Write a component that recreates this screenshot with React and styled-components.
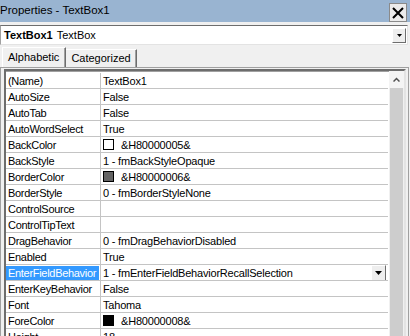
import React from "react";
import styled, { createGlobalStyle } from "styled-components";

const Global = createGlobalStyle`
  html, body { margin: 0; padding: 0; background: #f0f0f0; }
  body { font-family: "Liberation Sans", Arial, sans-serif; }
`;

const Window = styled.div`
  width: 410px;
  height: 336px;
  overflow: hidden;
  background: #f0f0f0;
  display: flex;
  flex-direction: column;
`;

const TitleBar = styled.div`
  height: 22px;
  flex: none;
  background: #99b4d1;
  display: flex;
  align-items: flex-start;
  justify-content: space-between;
`;

const Title = styled.span`
  font-size: 11.5px;
  line-height: 20px;
  color: #000;
`;

const CloseButton = styled.div`
  width: 16px;
  height: 17px;
  margin: 3px 3px 0 0;
  background: #ebebeb;
  border: 1px solid #8a8a8a;
  display: flex;
  align-items: center;
  justify-content: center;
`;

const ObjectSelect = styled.div`
  margin: 3px 2px 0 0;
  height: 16px;
  flex: none;
  background: #fff;
  border-top: 1px solid #6d6d6d;
  border-left: 1px solid #a0a0a0;
  border-bottom: 1px solid #e3e3e3;
  border-right: 1px solid #e3e3e3;
  display: flex;
  align-items: center;
  justify-content: space-between;
  font-size: 11px;
  padding: 1px 1px 1px 3px;
`;

const ObjName = styled.b`
  font-weight: bold;
  margin-right: 4px;
`;

const DropButton = styled.div`
  width: ${(p) => p.w || 12}px;
  height: ${(p) => p.h || 13}px;
  margin-right: ${(p) => p.mr || 0}px;
  background: #eeeeee;
  border-top: 1px solid #fff;
  border-left: 1px solid #fff;
  border-right: 1px solid #6d6d6d;
  border-bottom: 1px solid #6d6d6d;
  display: flex;
  align-items: center;
  justify-content: center;
`;

const TabStrip = styled.div`
  height: 21px;
  flex: none;
  display: flex;
  align-items: flex-end;
  padding-left: 2px;
  margin-top: 1px;
`;

const Tab = styled.div`
  height: ${(p) => (p.active ? 19 : 17)}px;
  padding: 0 ${(p) => (p.active ? 6 : 5)}px 0 5px;
  font-size: 11px;
  line-height: ${(p) => (p.active ? 19 : 17)}px;
  color: #000;
  background: #f0f0f0;
  border-top: 1px solid #fff;
  border-left: ${(p) => (p.active ? "1px solid #fff" : "none")};
  border-right: 1px solid #6d6d6d;
  box-shadow: inset -1px 0 0 #a0a0a0;
`;

const Frame = styled.div`
  flex: 1;
  min-height: 0;
  border-top: 1px solid #a0a0a0;
  border-left: 1px solid #a0a0a0;
  border-right: 1px solid #a0a0a0;
  margin-right: 1px;
  padding: 1px 2px 0 3px;
  display: flex;
`;

const Inner = styled.div`
  flex: 1;
  min-height: 0;
  display: flex;
  background: #fff;
  border-top: 2px solid #6d6d6d;
  border-left: 2px solid #6d6d6d;
  border-right: 2px solid #e3e3e3;
  box-shadow: inset 0 1px 0 #a0a0a0;
`;

const PropList = styled.div`
  flex: 1;
  padding-top: 2px;
  margin-right: 1px;
`;

const Row = styled.div`
  display: grid;
  grid-template-columns: 95px 1fr;
  height: 15px;
  border-bottom: 1px solid #c4c4c4;
  font-size: 11px;
  letter-spacing: -0.2px;
  color: #000;
`;

const NameCell = styled.div`
  border-right: 1px solid #c4c4c4;
  overflow: hidden;
  white-space: nowrap;
  display: flex;
  align-items: center;
  letter-spacing: -0.3px;
`;

const NameLabel = styled.span`
  display: block;
  flex: 1;
  line-height: 14px;
  padding-left: 2px;
  margin-right: 1px;
  background: ${(p) => (p.selected ? "#3399ff" : "transparent")};
  color: ${(p) => (p.selected ? "#fff" : "#000")};
`;

const ValueCell = styled.div`
  display: flex;
  align-items: center;
  justify-content: space-between;
  padding-left: 2px;
  white-space: nowrap;
  overflow: hidden;
`;

const ValueText = styled.span`
  display: flex;
  align-items: center;
`;

const Swatch = styled.span`
  width: 9px;
  height: 9px;
  border: 1px solid #000;
  background: ${(p) => p.color};
  margin-right: 7px;
`;

const ScrollBar = styled.div`
  width: 15px;
  flex: none;
  display: flex;
  flex-direction: column;
  background: #f0f0f0;
`;

const ScrollArrow = styled.div`
  height: 17px;
  background: #f4f4f4;
  display: flex;
  align-items: center;
  justify-content: center;
`;

const Thumb = styled.div`
  flex: 1;
  margin: 0 1px;
  background: #cdcdcd;
`;

const props = [
  { name: "(Name)", value: "TextBox1" },
  { name: "AutoSize", value: "False" },
  { name: "AutoTab", value: "False" },
  { name: "AutoWordSelect", value: "True" },
  { name: "BackColor", value: "&H80000005&", swatch: "#ffffff" },
  { name: "BackStyle", value: "1 - fmBackStyleOpaque" },
  { name: "BorderColor", value: "&H80000006&", swatch: "#646464" },
  { name: "BorderStyle", value: "0 - fmBorderStyleNone" },
  { name: "ControlSource", value: "" },
  { name: "ControlTipText", value: "" },
  { name: "DragBehavior", value: "0 - fmDragBehaviorDisabled" },
  { name: "Enabled", value: "True" },
  { name: "EnterFieldBehavior", value: "1 - fmEnterFieldBehaviorRecallSelection", selected: true },
  { name: "EnterKeyBehavior", value: "False" },
  { name: "Font", value: "Tahoma" },
  { name: "ForeColor", value: "&H80000008&", swatch: "#000000" },
  { name: "Height", value: "18" },
];

const DownArrow = () => (
  <svg width="7" height="4" viewBox="0 0 7 4">
    <path d="M0 0h7L3.5 4z" fill="#000" />
  </svg>
);

export default function App() {
  return (
    <Window>
      <Global />
      <TitleBar>
        <Title>Properties - TextBox1</Title>
        <CloseButton>
          <svg width="12" height="12" viewBox="0 0 12 12">
            <path d="M1 1L11 11M11 1L1 11" stroke="#000" strokeWidth="2" />
          </svg>
        </CloseButton>
      </TitleBar>
      <ObjectSelect>
        <span>
          <ObjName>TextBox1</ObjName>TextBox
        </span>
        <DropButton>
          <svg width="5" height="3" viewBox="0 0 5 3">
            <path d="M0 0h5L2.5 3z" fill="#000" />
          </svg>
        </DropButton>
      </ObjectSelect>
      <TabStrip>
        <Tab active>Alphabetic</Tab>
        <Tab>Categorized</Tab>
      </TabStrip>
      <Frame>
        <Inner>
          <PropList>
            {props.map((p) => (
              <Row key={p.name}>
                <NameCell>
                  <NameLabel selected={p.selected}>{p.name}</NameLabel>
                </NameCell>
                <ValueCell>
                  <ValueText>
                    {p.swatch && <Swatch color={p.swatch} />}
                    {p.value}
                  </ValueText>
                  {p.selected && (
                    <DropButton w={13} h={14} mr={2}>
                      <DownArrow />
                    </DropButton>
                  )}
                </ValueCell>
              </Row>
            ))}
          </PropList>
          <ScrollBar>
            <ScrollArrow>
              <svg width="7" height="5" viewBox="0 0 7 5">
                <path d="M0.5 4.5L3.5 1.5L6.5 4.5" stroke="#505050" strokeWidth="1.5" fill="none" />
              </svg>
            </ScrollArrow>
            <Thumb />
          </ScrollBar>
        </Inner>
      </Frame>
    </Window>
  );
}
